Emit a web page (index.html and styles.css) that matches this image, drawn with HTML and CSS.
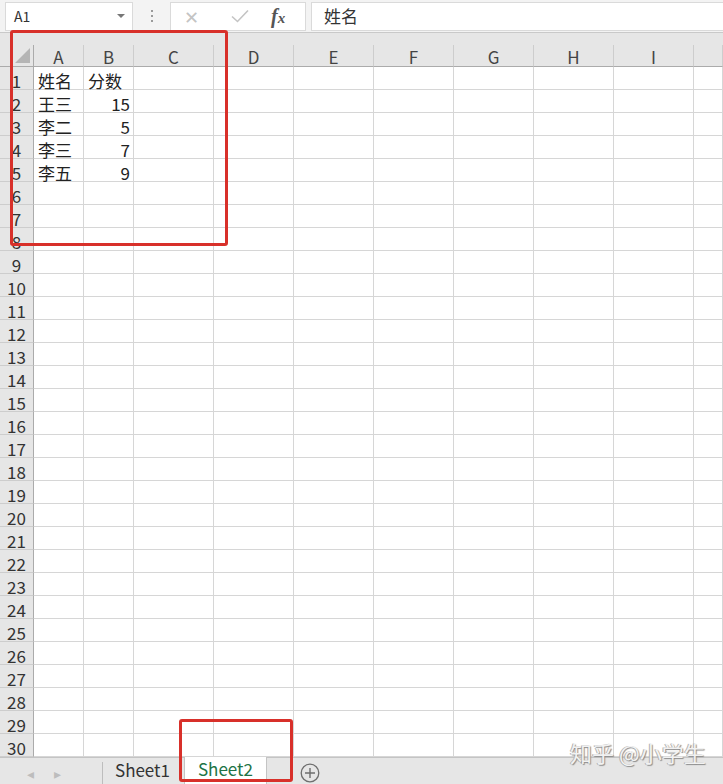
FILE: index.html
```html
<!DOCTYPE html>
<html>
<head>
    <title>Book1 - Sheet2</title>
    <link rel="stylesheet" href="styles.css">
</head>
<body>

    <div class="toolbar">
        <div class="name-box">
            <span>A1</span>
            <span class="caret"></span>
        </div>
        <div class="grip">
            <i></i><i></i><i></i>
        </div>
        <div class="fx-buttons">
            <span class="btn-cancel">&#x2715;</span>
            <span class="btn-ok">
                <svg width="18" height="14" viewBox="0 0 18 14"><path d="M1 7.5 L6.5 12.5 L17 1.5" fill="none" stroke="#c4c4c4" stroke-width="1.6"/></svg>
            </span>
            <span class="btn-fx"><i>f</i><i class="x">x</i></span>
        </div>
        <div class="formula-input">姓名</div>
    </div>

    <div class="top-band"></div>

    <table class="grid">
        <colgroup>
            <col class="c-head">
            <col class="c-narrow"><col class="c-narrow">
            <col class="c-wide"><col class="c-wide"><col class="c-wide"><col class="c-wide">
            <col class="c-wide"><col class="c-wide"><col class="c-wide">
            <col class="c-rest">
        </colgroup>
        <thead>
            <tr>
                <th class="corner"><span class="corner-tri"></span></th>
                <th>A</th><th>B</th><th>C</th><th>D</th><th>E</th>
                <th>F</th><th>G</th><th>H</th><th>I</th><th></th>
            </tr>
        </thead>
        <tbody>
            <tr><th>1</th><td>姓名</td><td>分数</td><td></td><td></td><td></td><td></td><td></td><td></td><td></td><td></td></tr>
            <tr><th>2</th><td>王三</td><td class="num">15</td><td></td><td></td><td></td><td></td><td></td><td></td><td></td><td></td></tr>
            <tr><th>3</th><td>李二</td><td class="num">5</td><td></td><td></td><td></td><td></td><td></td><td></td><td></td><td></td></tr>
            <tr><th>4</th><td>李三</td><td class="num">7</td><td></td><td></td><td></td><td></td><td></td><td></td><td></td><td></td></tr>
            <tr><th>5</th><td>李五</td><td class="num">9</td><td></td><td></td><td></td><td></td><td></td><td></td><td></td><td></td></tr>
            <tr><th>6</th><td></td><td></td><td></td><td></td><td></td><td></td><td></td><td></td><td></td><td></td></tr>
            <tr><th>7</th><td></td><td></td><td></td><td></td><td></td><td></td><td></td><td></td><td></td><td></td></tr>
            <tr><th>8</th><td></td><td></td><td></td><td></td><td></td><td></td><td></td><td></td><td></td><td></td></tr>
            <tr><th>9</th><td></td><td></td><td></td><td></td><td></td><td></td><td></td><td></td><td></td><td></td></tr>
            <tr><th>10</th><td></td><td></td><td></td><td></td><td></td><td></td><td></td><td></td><td></td><td></td></tr>
            <tr><th>11</th><td></td><td></td><td></td><td></td><td></td><td></td><td></td><td></td><td></td><td></td></tr>
            <tr><th>12</th><td></td><td></td><td></td><td></td><td></td><td></td><td></td><td></td><td></td><td></td></tr>
            <tr><th>13</th><td></td><td></td><td></td><td></td><td></td><td></td><td></td><td></td><td></td><td></td></tr>
            <tr><th>14</th><td></td><td></td><td></td><td></td><td></td><td></td><td></td><td></td><td></td><td></td></tr>
            <tr><th>15</th><td></td><td></td><td></td><td></td><td></td><td></td><td></td><td></td><td></td><td></td></tr>
            <tr><th>16</th><td></td><td></td><td></td><td></td><td></td><td></td><td></td><td></td><td></td><td></td></tr>
            <tr><th>17</th><td></td><td></td><td></td><td></td><td></td><td></td><td></td><td></td><td></td><td></td></tr>
            <tr><th>18</th><td></td><td></td><td></td><td></td><td></td><td></td><td></td><td></td><td></td><td></td></tr>
            <tr><th>19</th><td></td><td></td><td></td><td></td><td></td><td></td><td></td><td></td><td></td><td></td></tr>
            <tr><th>20</th><td></td><td></td><td></td><td></td><td></td><td></td><td></td><td></td><td></td><td></td></tr>
            <tr><th>21</th><td></td><td></td><td></td><td></td><td></td><td></td><td></td><td></td><td></td><td></td></tr>
            <tr><th>22</th><td></td><td></td><td></td><td></td><td></td><td></td><td></td><td></td><td></td><td></td></tr>
            <tr><th>23</th><td></td><td></td><td></td><td></td><td></td><td></td><td></td><td></td><td></td><td></td></tr>
            <tr><th>24</th><td></td><td></td><td></td><td></td><td></td><td></td><td></td><td></td><td></td><td></td></tr>
            <tr><th>25</th><td></td><td></td><td></td><td></td><td></td><td></td><td></td><td></td><td></td><td></td></tr>
            <tr><th>26</th><td></td><td></td><td></td><td></td><td></td><td></td><td></td><td></td><td></td><td></td></tr>
            <tr><th>27</th><td></td><td></td><td></td><td></td><td></td><td></td><td></td><td></td><td></td><td></td></tr>
            <tr><th>28</th><td></td><td></td><td></td><td></td><td></td><td></td><td></td><td></td><td></td><td></td></tr>
            <tr><th>29</th><td></td><td></td><td></td><td></td><td></td><td></td><td></td><td></td><td></td><td></td></tr>
            <tr><th>30</th><td></td><td></td><td></td><td></td><td></td><td></td><td></td><td></td><td></td><td></td></tr>
        </tbody>
    </table>

    <div class="tabbar">
        <div class="tab-nav">
            <span class="arrow">&#x25C2;</span>
            <span class="arrow">&#x25B8;</span>
        </div>
        <div class="tab">Sheet1</div>
        <div class="tab active">Sheet2</div>
        <div class="add-sheet">
            <svg width="20" height="20" viewBox="0 0 20 20"><circle cx="10" cy="10" r="8.8" fill="none" stroke="#6e6e6e" stroke-width="1.3"/><path d="M10 5 V15 M5 10 H15" stroke="#6e6e6e" stroke-width="1.4"/></svg>
        </div>
    </div>

    <!-- annotations drawn over the screenshot -->
    <div class="mark mark-data"></div>
    <div class="mark mark-tab"></div>
    <div class="watermark">知乎 @小学生</div>

</body>
</html>
```

FILE: styles.css
```css
* {
    box-sizing: border-box;
}

body {
    margin: 0;
    width: 723px;
    height: 784px;
    overflow: hidden;
    position: relative;
    font-family: "Noto Sans CJK SC", "Noto Sans", sans-serif;
    color: #222;
    background-color: #fff;
}

/* formula bar */
.toolbar {
    display: flex;
    align-items: center;
    height: 33px;
    padding: 2px 0 2px 5px;
    background-color: #f3f3f3;
    border-bottom: 1px solid #c9c9c9;
}

.name-box {
    display: flex;
    align-items: center;
    justify-content: space-between;
    width: 128px;
    height: 29px;
    padding: 0 7px 0 8px;
    background: #fff;
    border: 1px solid #dadada;
    font-size: 14px;
    color: #333;
}

.caret {
    width: 0;
    height: 0;
    border-left: 4px solid transparent;
    border-right: 4px solid transparent;
    border-top: 4px solid #777;
}

.grip {
    display: flex;
    flex-direction: column;
    align-items: center;
    gap: 3px;
    width: 37px;
}

.grip i {
    width: 2px;
    height: 2px;
    background: #9a9a9a;
}

.fx-buttons {
    display: flex;
    align-items: center;
    width: 136px;
    height: 29px;
    background: #fff;
    border: 1px solid #dadada;
}

.btn-cancel {
    width: 48px;
    padding-left: 13px;
    font-size: 18px;
    color: #c4c4c4;
}

.btn-ok {
    display: flex;
    width: 44px;
    padding-left: 12px;
}

.btn-fx {
    padding-left: 8px;
    font-family: "Liberation Serif", serif;
    font-size: 20px;
    font-weight: bold;
    color: #555;
}

.btn-fx .x {
    font-size: 15px;
}

.formula-input {
    flex: 1;
    height: 29px;
    margin-left: 5px;
    padding-left: 12px;
    background: #fff;
    border: 1px solid #dadada;
    border-right: none;
    font-size: 17px;
    line-height: 26px;
    color: #333;
}

.top-band {
    height: 12px;
    background-color: #e6e6e6;
}

/* sheet grid */
.grid {
    table-layout: fixed;
    border-collapse: separate;
    border-spacing: 0;
    width: 723px;
    font-size: 17px;
}

.c-head { width: 34px; }
.c-narrow { width: 50px; }
.c-wide { width: 80px; }
.c-rest { width: 29px; }

.grid thead th {
    height: 22px;
    padding: 2px 0 0;
    background-color: #e6e6e6;
    border-right: 1px solid #cdcdcd;
    border-bottom: 1px solid #ababab;
    font-weight: normal;
    line-height: 19px;
    color: #444;
}

.grid thead th.corner {
    position: relative;
    border-right: 1px solid #ababab;
}

.corner-tri {
    position: absolute;
    right: 3px;
    bottom: 3px;
    width: 0;
    height: 0;
    border-left: 15px solid transparent;
    border-bottom: 15px solid #b5b5b5;
}

.grid tbody th {
    height: 23px;
    padding: 5px 0 0;
    background-color: #e6e6e6;
    border-right: 1px solid #ababab;
    border-bottom: 1px solid #cdcdcd;
    font-weight: normal;
    line-height: 17px;
    text-align: center;
    color: #333;
}

.grid td {
    height: 23px;
    padding: 5px 4px 0;
    border-right: 1px solid #d6d6d6;
    border-bottom: 1px solid #d6d6d6;
    line-height: 17px;
    white-space: nowrap;
}

.grid td.num {
    text-align: right;
    padding-right: 3px;
}

/* sheet tabs */
.tabbar {
    display: flex;
    align-items: stretch;
    height: 27px;
    background-color: #e6e6e6;
    border-top: 1px solid #c4c4c4;
}

.tab-nav {
    display: flex;
    align-items: center;
    width: 103px;
    padding-left: 27px;
    gap: 20px;
    border-right: 1px solid #bdbdbd;
    margin: 4px 0 0;
}

.arrow {
    font-size: 14px;
    color: #bdbdbd;
}

.tab {
    padding: 0 12px;
    font-size: 17px;
    line-height: 24px;
    color: #333;
}

.tab.active {
    margin-left: 2px;
    padding: 0 13px;
    background: #fff;
    color: #217346;
    border-left: 1px solid #c4c4c4;
    border-right: 1px solid #c4c4c4;
    margin-top: -1px;
}

.add-sheet {
    display: flex;
    align-items: center;
    padding: 4px 0 0 33px;
}

/* annotation overlays */
.mark {
    position: absolute;
    border: 3px solid #d8302a;
    border-radius: 3px;
}

.mark-data {
    left: 10px;
    top: 30px;
    width: 218px;
    height: 216px;
}

.mark-tab {
    left: 179px;
    top: 719px;
    width: 114px;
    height: 63px;
}

.watermark {
    position: absolute;
    left: 570px;
    top: 736px;
    font-size: 22px;
    color: #f2f2f2;
    text-shadow: 1px 1px 1px #8a8a8a, -1px 0 0 #b0b0b0;
}
```
